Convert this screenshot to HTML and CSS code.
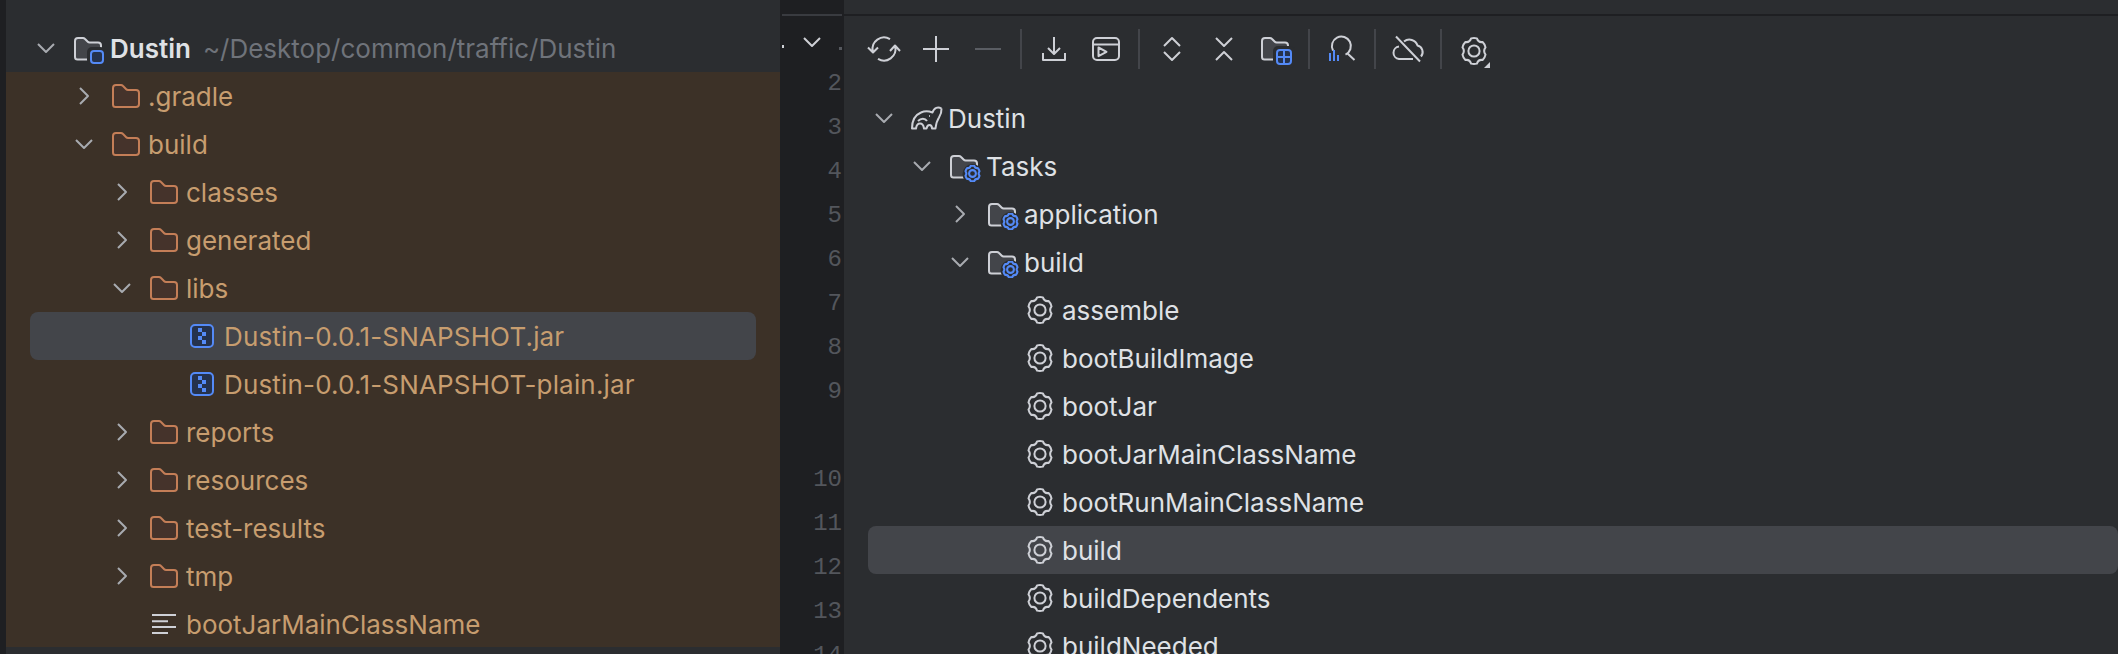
FILE: index.html
```html
<!DOCTYPE html>
<html lang="en">
<head>
<meta charset="utf-8">
<title>Dustin</title>
<link rel="stylesheet" href="styles.css">
</head>
<body>
<svg class="sprite" aria-hidden="true">
  <symbol id="down" viewBox="0 0 20 20"><path d="M2 6l8 8 8-8"/></symbol>
  <symbol id="right" viewBox="0 0 20 20"><path d="M6 2l8 8-8 8"/></symbol>
  <symbol id="folder" viewBox="0 0 28 24"><path d="M1 20.5V4a3 3 0 0 1 3-3h5a2.5 2.5 0 0 1 1.8.8l3.4 3.4a2.5 2.5 0 0 0 1.8.8H24a3 3 0 0 1 3 3V20a3 3 0 0 1-3 3H3.5A2.5 2.5 0 0 1 1 20.5z"/></symbol>
  <symbol id="gear" viewBox="0 0 28 28"><path d="M11.1 1.4Q14 .7 16.9 1.4Q18.4 5.8 22.6 5Q24.900 7.200 25.500 10.400Q22.800 14 25.500 17.600Q24.900 20.800 22.600 23Q18.400 22.200 16.900 26.600Q14 27.300 11.100 26.600Q9.600 22.200 5.400 23Q3.100 20.800 2.500 17.600Q5.200 14 2.500 10.400Q3.100 7.200 5.400 5Q9.600 5.800 11.100 1.400Z"/><circle cx="14" cy="14" r="5.600"/></symbol>
  <symbol id="gfolder" viewBox="0 0 30 30"><path class="gf" d="M1 24V8a3 3 0 0 1 3-3h5a2.5 2.5 0 0 1 1.8.8l3 3a2.5 2.5 0 0 0 1.8.8H24a3 3 0 0 1 3 3V24a2.5 2.5 0 0 1-2.5 2.5h-21A2.5 2.5 0 0 1 1 24z"/></symbol>
  <symbol id="jar" viewBox="0 0 24 24"><rect class="bl" x="1" y="1" width="22" height="22" rx="4"/><path class="bd" d="M8 4h4v4H8zM12 8h4v4h-4zM8 12h4v4H8zM12 16h4v4h-4z"/></symbol>
</svg>

<div class="app">
  <section class="project">
    <div class="row d0 head">
      <span class="chev"><svg class="ic"><use href="#down"/></svg></span>
      <span class="ico">
        <svg class="sq30" viewBox="0 0 30 30">
          <use href="#gfolder" width="30" height="30"/>
          <rect class="halo" x="13" y="14" width="18" height="18" rx="5"/>
          <rect class="bl" x="17" y="18" width="12" height="12" rx="3"/>
        </svg>
      </span>
      <span class="name strong">Dustin</span>
      <span class="path">~/Desktop/common/traffic/Dustin</span>
    </div>
    <div class="excluded">
      <div class="row d1"><span class="chev"><svg class="ic"><use href="#right"/></svg></span><span class="ico"><svg class="fold"><use href="#folder"/></svg></span><span class="name">.gradle</span></div>
      <div class="row d1"><span class="chev"><svg class="ic"><use href="#down"/></svg></span><span class="ico"><svg class="fold"><use href="#folder"/></svg></span><span class="name">build</span></div>
      <div class="row d2"><span class="chev"><svg class="ic"><use href="#right"/></svg></span><span class="ico"><svg class="fold"><use href="#folder"/></svg></span><span class="name">classes</span></div>
      <div class="row d2"><span class="chev"><svg class="ic"><use href="#right"/></svg></span><span class="ico"><svg class="fold"><use href="#folder"/></svg></span><span class="name">generated</span></div>
      <div class="row d2"><span class="chev"><svg class="ic"><use href="#down"/></svg></span><span class="ico"><svg class="fold"><use href="#folder"/></svg></span><span class="name">libs</span></div>
      <div class="row d3 sel"><span class="chev"></span><span class="ico"><svg class="jar"><use href="#jar"/></svg></span><span class="name tab">Dustin-0.0.1-SNAPSHOT.jar</span></div>
      <div class="row d3"><span class="chev"></span><span class="ico"><svg class="jar"><use href="#jar"/></svg></span><span class="name tab">Dustin-0.0.1-SNAPSHOT-plain.jar</span></div>
      <div class="row d2"><span class="chev"><svg class="ic"><use href="#right"/></svg></span><span class="ico"><svg class="fold"><use href="#folder"/></svg></span><span class="name">reports</span></div>
      <div class="row d2"><span class="chev"><svg class="ic"><use href="#right"/></svg></span><span class="ico"><svg class="fold"><use href="#folder"/></svg></span><span class="name">resources</span></div>
      <div class="row d2"><span class="chev"><svg class="ic"><use href="#right"/></svg></span><span class="ico"><svg class="fold"><use href="#folder"/></svg></span><span class="name">test-results</span></div>
      <div class="row d2"><span class="chev"><svg class="ic"><use href="#right"/></svg></span><span class="ico"><svg class="fold"><use href="#folder"/></svg></span><span class="name">tmp</span></div>
      <div class="row d2"><span class="chev"></span><span class="ico"><svg class="lines" viewBox="0 0 24 20"><path d="M0 1h24M0 7.3h16M0 13h24M0 19h16"/></svg></span><span class="name">bootJarMainClassName</span></div>
    </div>
  </section>

  <section class="gutter">
    <div class="tabline">
      <span class="mark"></span>
      <svg class="ic"><use href="#down"/></svg>
      <span class="mark low"></span>
    </div>
    <div class="ln">2</div><div class="ln">3</div><div class="ln">4</div><div class="ln">5</div>
    <div class="ln">6</div><div class="ln">7</div><div class="ln">8</div><div class="ln">9</div>
    <div class="ln gap">10</div><div class="ln">11</div><div class="ln">12</div><div class="ln">13</div><div class="ln">14</div>
  </section>

  <section class="gradle">
    <div class="toolbar">
      <span class="btn"><svg class="tool" width="32" height="24" viewBox="0 0 32 24"><path d="M22 2.200A11.500 11.500 0 0 0 4.800 14.500M0 10.500L5 15.500l5-5M10 21.800A11.500 11.500 0 0 0 27.200 9.500M22 14L27 8.500l5 5.500"/></svg></span>
      <span class="btn"><svg class="tool" width="26" height="26" viewBox="0 0 26 26"><path d="M0 13h26M13 0v26"/></svg></span>
      <span class="btn"><svg class="tool off" width="26" height="26" viewBox="0 0 26 26"><path d="M0 13h26"/></svg></span>
      <span class="sep"></span>
      <span class="btn"><svg class="tool" width="24" height="24" viewBox="0 0 24 24"><path d="M12 0v17M6 11l6 6 6-6M1 16v7h22v-7"/></svg></span>
      <span class="btn"><svg class="tool" width="28" height="24" viewBox="0 0 28 24"><rect x="1" y="1" width="26" height="22" rx="4"/><path d="M1 7.500h26M6.500 10.500l8 4.300-8 4.300z"/></svg></span>
      <span class="sep"></span>
      <span class="btn"><svg class="tool" width="18" height="26" viewBox="0 0 18 26"><path d="M1 10l8-8 8 8M1 16l8 8 8-8"/></svg></span>
      <span class="btn"><svg class="tool" width="18" height="26" viewBox="0 0 18 26"><path d="M1 2l8 8 8-8M1 24l8-8 8 8"/></svg></span>
      <span class="btn"><svg class="sq30 shift" viewBox="0 0 30 30">
        <use href="#gfolder" width="30" height="30"/>
        <rect class="halo" x="12" y="13" width="22" height="22" rx="5"/>
        <rect class="bl" x="16" y="17" width="14" height="14" rx="3"/>
        <path class="blue" d="M23 17v14M16 24h14"/>
      </svg></span>
      <span class="sep"></span>
      <span class="btn"><svg class="tool" width="28" height="28" viewBox="0 0 28 28"><path d="M5 15.500A9.500 9.500 0 1 1 17.500 19.600M19 18l7.500 7"/><path class="blue" d="M2 18v8M6 15v11M10 20v6"/></svg></span>
      <span class="sep"></span>
      <span class="btn"><svg class="tool" width="32" height="28" viewBox="0 0 32 28"><path d="M7 11.500A6.300 6.300 0 0 0 7 24H21M12 6.500A8.500 8.500 0 0 1 25.500 10.500A6.800 6.800 0 0 1 29 21.500M4 1.500L28 26.500"/></svg></span>
      <span class="sep"></span>
      <span class="btn"><svg class="tool gearbtn" width="32" height="34" viewBox="0 0 32 34"><use href="#gear" width="28" height="28" x="0" y="2"/><path class="tri" d="M30 27v6h-6z"/></svg></span>
    </div>
    <div class="row d0"><span class="chev"><svg class="ic"><use href="#down"/></svg></span><span class="ico"><svg class="tool eleph" width="32" height="24" viewBox="0 0 32 24"><path d="M30.500 2.500C27 .5 23 1.500 21.500 6.500C18 5 14 4.500 10 6.500C4 9 1 15 1 22.500H5C5.500 19 7 17.500 9 17.500C11 17.500 12.500 19 13 22.500H15.500C16 20 17 19 18.500 19C20 19 21 20.500 21 22.500H24.500C25 18 26 14.500 28 11.500C29.500 9 30.800 6.500 30.500 2.500"/><path d="M7 15C10 12 14 12 16 15M18 10h.8"/></svg></span><span class="name">Dustin</span></div>
    <div class="row d1"><span class="chev"><svg class="ic"><use href="#down"/></svg></span><span class="ico"><svg class="sq30" viewBox="0 0 30 30"><use href="#gfolder" width="30" height="30"/><circle class="halo" cx="22.500" cy="23" r="10"/><use href="#gear" class="bgear" x="14" y="14" width="17" height="17"/></svg></span><span class="name">Tasks</span></div>
    <div class="row d2"><span class="chev"><svg class="ic"><use href="#right"/></svg></span><span class="ico"><svg class="sq30" viewBox="0 0 30 30"><use href="#gfolder" width="30" height="30"/><circle class="halo" cx="22.500" cy="23" r="10"/><use href="#gear" class="bgear" x="14" y="14" width="17" height="17"/></svg></span><span class="name">application</span></div>
    <div class="row d2"><span class="chev"><svg class="ic"><use href="#down"/></svg></span><span class="ico"><svg class="sq30" viewBox="0 0 30 30"><use href="#gfolder" width="30" height="30"/><circle class="halo" cx="22.500" cy="23" r="10"/><use href="#gear" class="bgear" x="14" y="14" width="17" height="17"/></svg></span><span class="name">build</span></div>
    <div class="row d3"><span class="chev"></span><span class="ico"><svg class="cog"><use href="#gear"/></svg></span><span class="name">assemble</span></div>
    <div class="row d3"><span class="chev"></span><span class="ico"><svg class="cog"><use href="#gear"/></svg></span><span class="name">bootBuildImage</span></div>
    <div class="row d3"><span class="chev"></span><span class="ico"><svg class="cog"><use href="#gear"/></svg></span><span class="name">bootJar</span></div>
    <div class="row d3"><span class="chev"></span><span class="ico"><svg class="cog"><use href="#gear"/></svg></span><span class="name">bootJarMainClassName</span></div>
    <div class="row d3"><span class="chev"></span><span class="ico"><svg class="cog"><use href="#gear"/></svg></span><span class="name">bootRunMainClassName</span></div>
    <div class="row d3 sel"><span class="chev"></span><span class="ico"><svg class="cog"><use href="#gear"/></svg></span><span class="name">build</span></div>
    <div class="row d3"><span class="chev"></span><span class="ico"><svg class="cog"><use href="#gear"/></svg></span><span class="name">buildDependents</span></div>
    <div class="row d3"><span class="chev"></span><span class="ico"><svg class="cog"><use href="#gear"/></svg></span><span class="name">buildNeeded</span></div>
  </section>
</div>
</body>
</html>
```
FILE: styles.css
```css
* { box-sizing: border-box; }
html, body { margin: 0; height: 100%; overflow: hidden; background: #1e1f22; }
body { font-family: Inter, "Noto Sans", sans-serif; font-size: 26px; color: #dfe1e5; }
.sprite { display: none; }
svg { overflow: visible; flex: none; display: block; fill: none; stroke: #ced0d6; stroke-width: 2; stroke-linejoin: round; }

.app { display: flex; height: 654px; padding-left: 6px; }

/* shared tree row */
.row { display: flex; align-items: center; height: 48px; border-radius: 8px; white-space: nowrap; }
.row.d0 { padding-left: 0; }
.row.d1 { padding-left: 38px; }
.row.d2 { padding-left: 76px; }
.row.d3 { padding-left: 114px; }
.row.sel { background: #43454a; }
.chev { width: 44px; flex: none; padding-left: 6px; }
.ico { width: 36px; flex: none; display: flex; align-items: center; }
.name { line-height: 48px; padding-top: 1px; }
.tab { letter-spacing: 0.17px; }
.strong { font-weight: 600; }
.path { margin-left: 12px; padding-top: 1px; color: #6f737a; }

.ic { width: 20px; height: 20px; stroke: #a8abb0; }
.sq30 { width: 30px; height: 30px; }
.cog { width: 28px; height: 28px; }
.fold { width: 28px; height: 24px; stroke: #c47e57; fill: #45332b; }
.jar { width: 24px; height: 24px; margin-left: 2px; }
.lines { width: 24px; height: 20px; margin-left: 2px; }
.gf { fill: #43454a; }
.halo { fill: #2b2d30; stroke: none; }
.bl { fill: #25324d; stroke: #548af7; }
.bd { fill: #548af7; stroke: none; }
.blue { stroke: #548af7; }
.bgear { stroke: #548af7; stroke-width: 3.4; }

/* project tree */
.project { width: 774px; flex: none; background: #2b2d30; padding-top: 24px; }
.head { margin: 0 24px; }
.excluded { background: #3c3127; padding: 0 24px; color: #c79d6f; height: 575px; }

/* editor gutter */
.gutter { width: 64px; flex: none; background: #1e1f22; overflow: hidden; }
.tabline { margin: 14px 2px 0; height: 48px; border-top: 2px solid #393b40; display: flex; justify-content: space-between; align-items: flex-start; padding-top: 16px; }
.tabline .ic { stroke: #ced0d6; }
.mark { width: 2px; height: 3px; background: #ced0d6; margin-top: 13px; }
.mark.low { width: 3px; background: #55585e; margin-top: 15px; }
.ln { height: 44px; line-height: 44px; text-align: right; padding-right: 2px; font-family: "Liberation Mono", "DejaVu Sans Mono", monospace; font-size: 24px; color: #53565c; }
.ln.gap { margin-top: 44px; }

/* gradle tool window */
.gradle { flex: 1; min-width: 0; background: #2b2d30; padding-top: 14px; overflow: hidden; border-top: 0; }
.toolbar { display: flex; align-items: center; height: 72px; padding: 0 0 4px 14px; border-top: 2px solid #1e1f22; margin-bottom: 8px; margin-left: 0; }
.gradle .row { margin-left: 24px; }
.btn { width: 52px; height: 40px; flex: none; display: flex; align-items: center; justify-content: center; }
.sep { width: 2px; height: 40px; margin: 0 6px; background: #43454a; flex: none; }
.off { stroke: #5a5d63; }
.shift { transform: translateY(-1px); }
.gearbtn { transform: translate(2px, 3px); }
.tri { fill: #ced0d6; stroke: none; }
.eleph { margin-left: -1px; }
```
